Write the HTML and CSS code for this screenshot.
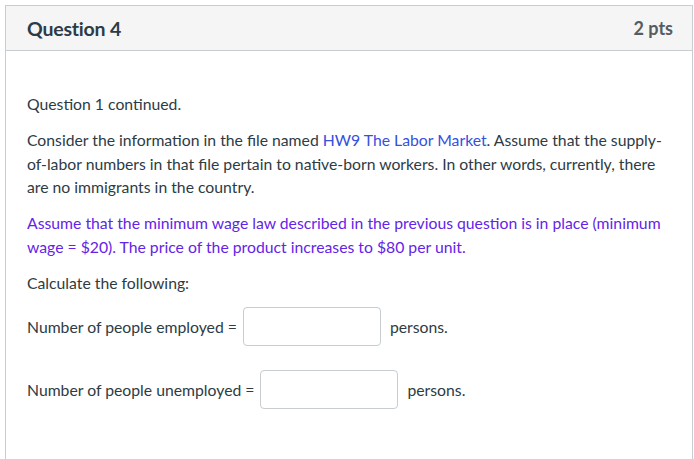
FILE: index.html
```html
<!DOCTYPE html>
<html>
<head>
<meta charset="utf-8">
<link rel="stylesheet" href="styles.css">
</head>
<body>
<div class="card">
  <div class="header">
    <h2 class="title">Question 4</h2>
    <span class="points">2 pts</span>
  </div>
  <div class="content">
    <p>Question 1 continued.</p>
    <p>Consider the information in the file named <a class="link" href="#">HW9 The Labor Market</a>. Assume that the supply-of-labor numbers in that file pertain to native-born workers. In other words, currently, there are no immigrants in the country.</p>
    <p class="purple">Assume that the minimum wage law described in the previous question is in place (minimum wage = $20). The price of the product increases to $80 per unit.</p>
    <p class="calc">Calculate the following:</p>
    <p class="answer">Number of people employed = <input class="box" type="text"> persons.</p>
    <p class="answer">Number of people unemployed = <input class="box" type="text"> persons.</p>
  </div>
</div>
</body>
</html>
```

FILE: styles.css
```css
html, body {
  margin: 0;
  padding: 0;
  background: #ffffff;
}

body {
  font-family: Lato, "Noto Sans", sans-serif;
  color: #2d3b45;
}

.card {
  margin: 5px 0 0 5px;
  width: 688px;
  box-sizing: border-box;
  border: 1px solid #c7cdd1;
  border-bottom: none;
  min-height: 460px;
}

.header {
  display: flex;
  align-items: center;
  justify-content: space-between;
  height: 44px;
  padding: 0 19px 0 21px;
  background: #f5f5f5;
  border-bottom: 1px solid #c7cdd1;
}

.title {
  margin: 0;
  font-size: 19.5px;
  font-weight: 700;
  color: #2d3b45;
  letter-spacing: -0.2px;
}

.points {
  font-size: 18px;
  font-weight: 700;
  color: #555d63;
}

.content {
  padding: 41px 20px 20px 21px;
  font-size: 15.75px;
  line-height: 23.6px;
  font-variant-ligatures: common-ligatures;
}

.content p {
  margin: 0 0 12.4px 0;
}

.link {
  color: #3450e0;
  text-decoration: none;
}

.purple {
  color: #6424e8;
}

.content p.calc {
  margin-bottom: 13px;
}

.content p.answer {
  display: flex;
  align-items: center;
  height: 39px;
  margin: 0 0 24px 0;
}

.box {
  width: 138px;
  height: 39px;
  box-sizing: border-box;
  margin: 0 9px 0 6px;
  border: 1px solid #c7cdd1;
  border-radius: 4px;
  background: #fff;
  font: inherit;
}
```
